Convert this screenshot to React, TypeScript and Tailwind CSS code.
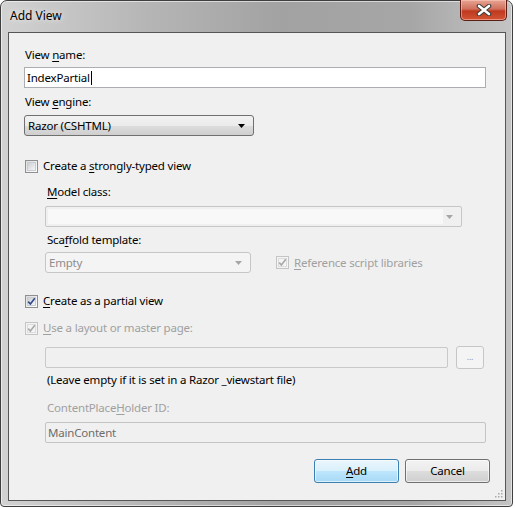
import type { ReactNode } from "react";

const font = "font-['Segoe_UI','Noto_Sans','Open_Sans',sans-serif] text-[11.5px] leading-[16px] tracking-[-0.2px]";

function Check({ checked, disabled }: { checked?: boolean; disabled?: boolean }) {
  return (
    <span
      className={`flex h-[13px] w-[13px] shrink-0 items-center justify-center border ${
        disabled ? "border-[#c4c4c4] bg-[#f4f4f4]" : "border-[#8e8f8f] bg-[linear-gradient(135deg,#dcdcdc,#ffffff)]"
      }`}
    >
      <span
        className={`flex h-[9px] w-[9px] items-center justify-center border ${
          disabled ? "border-[#dcdcdc] bg-[#f4f4f4]" : "border-[#c9cdd2] bg-[linear-gradient(135deg,#cbcfd5,#f6f6f6)]"
        }`}
      >
        {checked && (
          <svg width="9" height="9" viewBox="0 0 9 9" className="overflow-visible">
            <path
              d="M1.2 4.6 L3.4 7 L7.8 1.2"
              fill="none"
              stroke={disabled ? "#a8a8a8" : "#31488a"}
              strokeWidth="1.6"
            />
          </svg>
        )}
      </span>
    </span>
  );
}

function CheckRow({ children, checked, disabled }: { children: ReactNode; checked?: boolean; disabled?: boolean }) {
  return (
    <div className="flex h-[16px] items-center gap-[5px] pl-[1px]">
      <Check checked={checked} disabled={disabled} />
      <span className={disabled ? "text-[#a0a0a0]" : "text-black"}>{children}</span>
    </div>
  );
}

function Arrow({ disabled }: { disabled?: boolean }) {
  return (
    <svg width="7" height="4" viewBox="0 0 7 4">
      <path d="M0 0 H7 L3.5 4 Z" fill={disabled ? "#a6a6a6" : "#000"} />
    </svg>
  );
}

function ButtonCombo({ w, text, disabled }: { w: string; text: string; disabled?: boolean }) {
  return (
    <div
      className={`${w} flex h-[21px] items-center justify-between rounded-[3px] border pl-[3px] pr-[8px] ${
        disabled
          ? "border-[#c6c6c6] bg-[#f4f4f4] text-[#8d8d8d]"
          : "border-[#707070] bg-[linear-gradient(#f2f2f2_0%,#ebebeb_50%,#dddddd_50%,#cfcfcf_100%)] text-black"
      }`}
    >
      <span>{text}</span>
      <Arrow disabled={disabled} />
    </div>
  );
}

function Glyph({ children }: { children: ReactNode }) {
  return <span className="underline underline-offset-[2px]">{children}</span>;
}

export default function App() {
  return (
    <div className={`h-[508px] w-[515px] bg-white ${font}`}>
      <div className="relative h-[507px] w-[513px] rounded-t-[7px] rounded-b-[4px] border border-[#3f3f3f] bg-[linear-gradient(90deg,#d2d2d2_0%,#b6b6b6_28%,#a2a2a2_55%,#a6a6a6_80%,#c4c4c4_100%)] shadow-[inset_0_0_0_1px_rgba(255,255,255,0.55)]">
        {/* title bar */}
        <div className="flex h-[31px] items-center pl-[9px] pb-[1px] text-[12px] tracking-normal text-black [text-shadow:0_0_6px_rgba(255,255,255,0.9)]">
          Add View
        </div>

        {/* close button */}
        <div className="absolute right-[5px] top-[-1px] flex h-[21px] w-[47px] items-center justify-center rounded-b-[5px] border border-t-0 border-[#5c1d14] bg-[linear-gradient(#e8a493_0%,#d0705c_45%,#c0391f_55%,#d25434_100%)] shadow-[inset_0_0_0_1px_rgba(255,210,200,0.5)]">
          <svg width="16" height="12" viewBox="0 0 16 12">
            <path d="M3 2 L13 10 M13 2 L3 10" stroke="#3b3b3b" strokeWidth="4.6" strokeLinecap="round" />
            <path d="M3 2 L13 10 M13 2 L3 10" stroke="#ffffff" strokeWidth="2.6" strokeLinecap="round" />
          </svg>
        </div>

        {/* client area */}
        <div className="relative mx-[7px] h-[469px] w-[498px] border border-[#565656] bg-[#f0f0f0] px-[15px] text-black">
          <div className="mt-[14px] pl-[1px]">
            View <Glyph>n</Glyph>ame:
          </div>
          <div className="mt-[4px] flex h-[21px] w-[462px] items-center border border-[#abadb3] bg-white pl-[2px]">
            IndexPartial
            <span className="ml-[1px] h-[14px] w-[1px] bg-black" />
          </div>

          <div className="mt-[6px] pl-[1px]">
            View <Glyph>e</Glyph>ngine:
          </div>
          <div className="mt-[5px]">
            <ButtonCombo w="w-[230px]" text="Razor (CSHTML)" />
          </div>

          <div className="mt-[22px]">
            <CheckRow>
              Create a <Glyph>s</Glyph>trongly-typed view
            </CheckRow>
          </div>

          <div className="ml-[21px]">
            <div className="mt-[10px] pl-[2px]">
              <Glyph>M</Glyph>odel class:
            </div>
            <div className="mt-[6px] flex h-[21px] w-[417px] items-center rounded-[2px] border border-[#c6c6c6] bg-[#f0f0f0] pl-[2px] pr-[5px]">
              <div className="h-[15px] w-[395px] bg-[#f8f8f8]" />
              <div className="flex flex-1 justify-center">
                <Arrow disabled />
              </div>
            </div>

            <div className="mt-[5px] pl-[2px]">
              Sca<Glyph>f</Glyph>fold template:
            </div>
            <div className="mt-[4px] flex items-center">
              <ButtonCombo w="w-[206px]" text="Empty" disabled />
              <div className="ml-[24px]">
                <CheckRow checked disabled>
                  <Glyph>R</Glyph>eference script libraries
                </CheckRow>
              </div>
            </div>
          </div>

          <div className="mt-[20px]">
            <CheckRow checked>
              <Glyph>C</Glyph>reate as a partial view
            </CheckRow>
          </div>
          <div className="mt-[11px]">
            <CheckRow checked disabled>
              <Glyph>U</Glyph>se a layout or master page:
            </CheckRow>
          </div>

          <div className="ml-[21px]">
            <div className="mt-[10px] flex h-[23px] items-center gap-[8px]">
              <div className="h-[21px] w-[403px] rounded-[2px] border border-[#c9c9c9] bg-[#f0f0f0]" />
              <div className="flex h-[23px] w-[28px] items-center justify-center rounded-[3px] border border-[#c6c6c6] bg-[#f4f4f4] pb-[2px] text-[9px] text-[#9a9a9a]">
                ...
              </div>
            </div>
            <div className="mt-[3px] pl-[2px]">(Leave empty if it is set in a Razor _viewstart file)</div>

            <div className="mt-[12px] pl-[2px] text-[#a0a0a0]">
              ContentPlace<Glyph>H</Glyph>older ID:
            </div>
            <div className="mt-[6px] flex h-[21px] w-[441px] items-center rounded-[2px] border border-[#c4c4c4] bg-[#f0f0f0] pl-[2px] text-[#6d6d6d]">
              MainContent
            </div>
          </div>

          <div className="mt-[16px] flex justify-end gap-[6px]">
            <div className="flex h-[24px] w-[85px] items-center justify-center rounded-[3px] border border-[#3c7fb1] bg-[linear-gradient(#eaf6fd_0%,#d9f0fc_50%,#bee6fd_50%,#a7d9f5_100%)] shadow-[inset_0_0_0_1px_rgba(255,255,255,0.6)]">
              <Glyph>A</Glyph>dd
            </div>
            <div className="flex h-[24px] w-[85px] items-center justify-center rounded-[3px] border border-[#707070] bg-[linear-gradient(#f2f2f2_0%,#ebebeb_50%,#dddddd_50%,#cfcfcf_100%)] shadow-[inset_0_0_0_1px_rgba(255,255,255,0.6)]">
              Cancel
            </div>
          </div>

          {/* resize grip */}
          <svg width="9" height="9" viewBox="0 0 9 9" className="absolute bottom-[2px] right-[2px]">
            {[
              [7, 1],
              [4, 4],
              [7, 4],
              [1, 7],
              [4, 7],
              [7, 7],
            ].map(([x, y]) => (
              <rect key={`${x}-${y}`} x={x} y={y} width="1.5" height="1.5" fill="#a8a8a8" />
            ))}
          </svg>
        </div>
      </div>
    </div>
  );
}
